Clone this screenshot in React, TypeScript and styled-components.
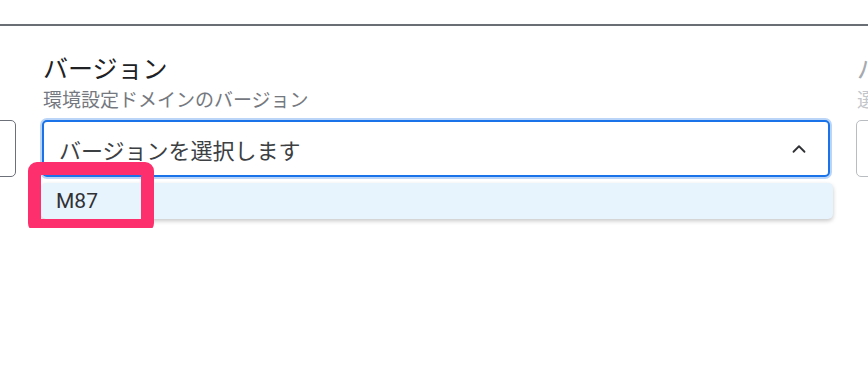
import * as React from "react";
import styled, { createGlobalStyle } from "styled-components";
import { ChevronUp } from "lucide-react";

const GlobalStyle = createGlobalStyle`
  html, body {
    margin: 0;
    padding: 0;
    background: #ffffff;
    overflow: hidden;
  }
  body {
    font-family: Roboto, "Noto Sans CJK JP", sans-serif;
  }
`;

type Field = {
  id: string;
  title: string;
  hint: string;
  placeholder: string;
  state: "idle" | "open" | "disabled";
  options?: string[];
};

// the first column only shows its box's right edge in the frame
const fields: Field[] = [
  { id: "domain", title: "", hint: "", placeholder: "", state: "idle" },
  { id: "version", title: "バージョン", hint: "環境設定ドメインのバージョン", placeholder: "バージョンを選択します", state: "open", options: ["M87"] },
  { id: "package", title: "パッケージ", hint: "選択したバージョンのパッケージ", placeholder: "", state: "disabled" },
];

export default function App() {
  return (
    <>
      <GlobalStyle />
      <TopRule />
      <Panel>
        <Row>
          {fields.map(field => (
            <Column key={field.id}>
              <Title muted={field.state === "disabled"}>{field.title}</Title>
              <Hint muted={field.state === "disabled"}>{field.hint}</Hint>
              <SelectWrap>
                <SelectBox state={field.state}>
                  {field.state === "open" && (
                    <>
                      <Placeholder>{field.placeholder}</Placeholder>
                      <ChevronUp size={22} strokeWidth={2} color="#303134" />
                    </>
                  )}
                </SelectBox>
                {field.state === "open" && field.options && (
                  <>
                    <Menu>
                      {field.options.map(option => (
                        <Option key={option}>{option}</Option>
                      ))}
                    </Menu>
                    <Highlight />
                  </>
                )}
              </SelectWrap>
            </Column>
          ))}
        </Row>
      </Panel>
    </>
  );
}

const TopRule = styled.div`
  height: 24px;
  border-bottom: 2px solid #6b6f76;
`;

const Panel = styled.div`
  position: relative;
  z-index: 1;
  height: 202px;
  padding-top: 25px;
  box-sizing: border-box;
  background: #ffffff;
  box-shadow: 0 3px 6px rgba(0, 0, 0, 0.12);
`;

const Row = styled.div`
  display: flex;
  gap: 26px;
  margin-left: -772px;
`;

const Column = styled.div`
  flex: 0 0 788px;
  display: flex;
  flex-direction: column;
`;

const Title = styled.div<{ muted?: boolean }>`
  height: 32px;
  font-family: "Noto Sans CJK JP", sans-serif;
  font-size: 25px;
  line-height: 32px;
  color: ${p => (p.muted ? "#a6aab0" : "#202124")};
  padding-left: 1px;
  white-space: nowrap;
`;

const Hint = styled.div<{ muted?: boolean }>`
  height: 24px;
  margin-top: 4px;
  font-family: "Noto Sans CJK JP", sans-serif;
  font-size: 19px;
  line-height: 24px;
  color: ${p => (p.muted ? "#c3c6ca" : "#75797f")};
  padding-left: 1px;
  white-space: nowrap;
`;

const SelectWrap = styled.div`
  position: relative;
  margin-top: 9px;
`;

const SelectBox = styled.div<{ state: Field["state"] }>`
  height: 57px;
  box-sizing: border-box;
  display: flex;
  align-items: center;
  justify-content: space-between;
  padding: 0 18px 0 15px;
  border-radius: 5px;
  background: #ffffff;
  border: ${p =>
    p.state === "open" ? "2px solid #1a73e8" : p.state === "disabled" ? "1.5px solid #b9bcc1" : "1.5px solid #6c7078"};
  box-shadow: ${p => (p.state === "open" ? "0 0 0 2px rgba(26, 115, 232, 0.3)" : "none")};
`;

const Placeholder = styled.span`
  font-family: "Noto Sans CJK JP", sans-serif;
  font-size: 22px;
  color: #3c4043;
  white-space: nowrap;
`;

const Menu = styled.ul`
  position: absolute;
  top: calc(100% + 6px);
  left: -1px;
  right: -3px;
  margin: 0;
  padding: 0;
  list-style: none;
  border-radius: 5px;
  background: #e7f3fd;
  box-shadow: 0 2px 4px rgba(0, 0, 0, 0.22);
  overflow: hidden;
`;

const Option = styled.li`
  height: 36px;
  display: flex;
  align-items: center;
  padding-left: 15px;
  font-family: Roboto, "Noto Sans CJK JP", sans-serif;
  font-size: 21px;
  color: #303134;
`;

const Highlight = styled.div`
  position: absolute;
  left: -14px;
  top: 42px;
  width: 126px;
  height: 70px;
  box-sizing: border-box;
  border: 13px solid #fd2f6c;
  border-radius: 9px;
  pointer-events: none;
`;
